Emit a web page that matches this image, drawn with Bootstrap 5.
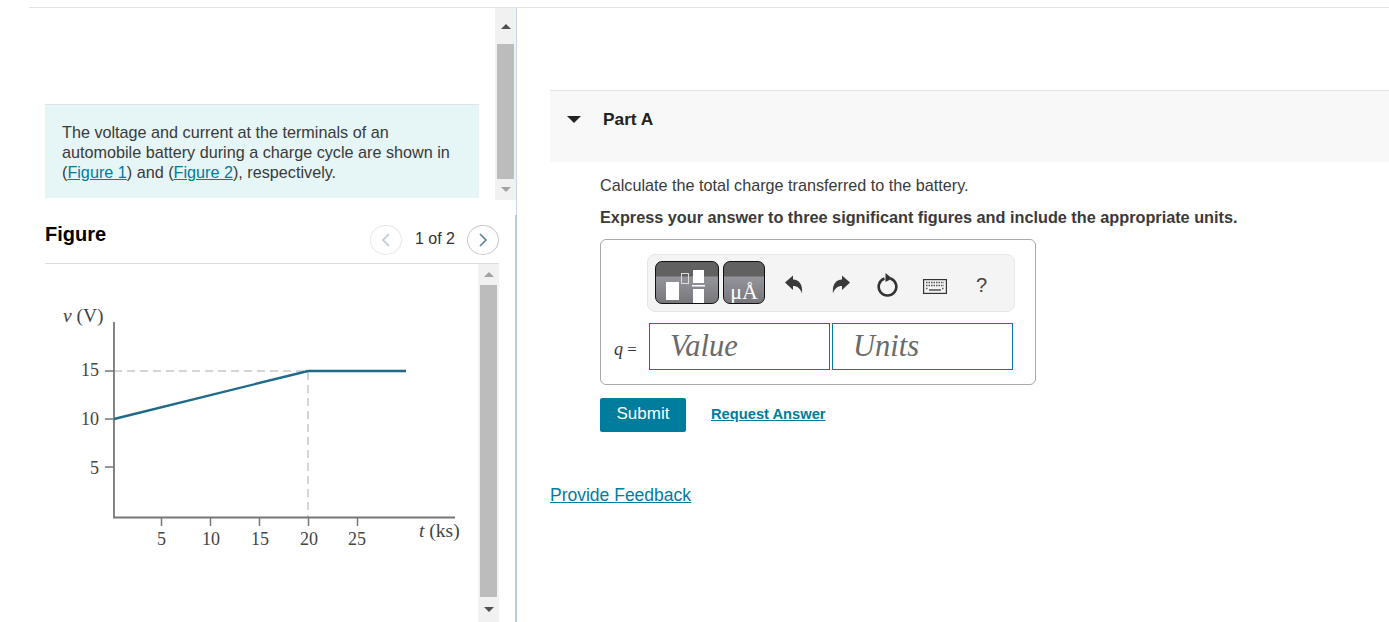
<!DOCTYPE html>
<html lang="en">
<head>
    <meta charset="UTF-8">
    <meta name="viewport" content="width=device-width, initial-scale=1.0">
    <title>Part A</title>
    <link href="https://cdn.jsdelivr.net/npm/bootstrap@5.3.0/dist/css/bootstrap.min.css" rel="stylesheet">
    <style>
        html, body { height: 622px; overflow: hidden; }
        body { font-family: "Liberation Sans", Arial, sans-serif; font-size: 16px; line-height: 20px; color: #3a3a3a; background: #fff; }
        a { color: #007c9d; }

        .frame { margin: 7px 0 0 29px; border-top: 1px solid #e3e3e3; height: 615px; }
        .left-pane { width: 488px; flex: none; }
        .intro-part { height: 207px; border-right: 1px solid #c9d6e4; }
        .intro-text { width: 466px; padding: 96px 0 0 16px; }
        .intro-box { width: 434px; height: 94px; background: #e6f5f6; border-top: 1px solid #dde4e6; padding: 17px 16px 0 17px; font-size: 16.2px; }
        .figure-part { height: 407px; padding-left: 16px; border-right: 2px solid #b6cadf; }
        .figure-head { width: 454px; height: 49px; border-bottom: 1px solid #ddd; }
        .figure-title { font-size: 20px; font-weight: 700; color: #000; margin: 9px 0 0 0; line-height: 20px; }
        .pager { margin-top: 10px; }
        .pager-count { color: #333; margin: 4px 12px 0 13px; }
        .pager-btn { width: 32px; height: 30px; border-radius: 50%; border: 1px solid #c8c8c8; background: #fff; padding: 0; display: flex; align-items: center; justify-content: center; }
        .pager-btn.is-off { border-color: #e6e6e6; }
        .figure-body { width: 454px; height: 358px; }
        .chart-wrap { width: 433px; }
        .chart-wrap svg { display: block; }
        .chart-num { font-family: "Liberation Serif", "Times New Roman", serif; font-size: 18px; fill: #444; }
        .chart-axis-name { font-family: "Liberation Serif", "Times New Roman", serif; font-size: 19.500px; fill: #444; }

        .fake-scroll { width: 21px; background: #f1f1f1; flex: none; }
        .fake-scroll.top-one { height: 192px; }
        .fake-scroll.fig-one { height: 358px; }
        .scroll-thumb { width: 17px; background: #bcbcbc; margin: 0 auto; }
        .top-one .scroll-thumb { height: 135px; }
        .fig-one .scroll-thumb { height: 312px; }
        .top-one .scroll-end { height: 36px; }
        .top-one .scroll-end:last-child { height: 21px; }
        .fig-one .scroll-end { height: 21px; }
        .fig-one .scroll-end:last-child { height: 25px; }
        .arrow-up { border-left: 5px solid transparent; border-right: 5px solid transparent; border-bottom: 5px solid #505050; }
        .arrow-down { border-left: 5px solid transparent; border-right: 5px solid transparent; border-top: 5px solid #505050; }
        .arrow-dim { border-top-color: #a3a3a3; border-bottom-color: #a3a3a3; }

        .right-pane { padding-left: 33px; min-width: 0; }
        .part-head { margin-top: 82px; height: 72px; background: #f8f8f8; border-top: 1px solid #e3e3e3; padding: 18px 0 0 17px; }
        .part-tri { border-left: 7px solid transparent; border-right: 7px solid transparent; border-top: 7px solid #222; margin-top: 7px; }
        .part-name { font-weight: 700; color: #222; margin-left: 22px; font-size: 17.300px; }
        .part-body { padding-left: 50px; }
        .task-line { margin: 13px 0 0; font-size: 16.200px; }
        .task-hint { margin: 12px 0 0; font-weight: 700; font-size: 16.250px; }
        .answer-box { width: 436px; height: 146px; margin-top: 12px; border: 1px solid #aaa; border-radius: 6px; padding: 14px 0 0 46px; }
        .tools { width: 368px; height: 58px; background: #f4f4f4; border: 1px solid #e6e6e6; border-radius: 8px; padding: 6px 0 0 7px; }
        .tpl-btn { height: 43px; border: 1px solid #111; border-radius: 7px; background: linear-gradient(#616161 0, #616161 14px, #94949c 15px, #77777b 100%); padding: 0; overflow: hidden; }
        .tpl-math { width: 64px; margin-right: 4px; }
        .tpl-units { width: 42px; margin-right: 5px; color: #fff; font-family: "Liberation Serif", serif; font-size: 22px; line-height: 20px; padding-top: 18px; }
        .tpl-btn svg { display: block; }
        .tool-slot { width: 47px; height: 43px; display: flex; align-items: center; justify-content: center; padding-top: 4px; }
        .tool-slot.keys-slot { padding-top: 7px; }
        .tool-help { font-size: 20px; color: #444; }
        .answer-row { margin: 11px 0 0 -33px; }
        .var-name { width: 35px; padding-top: 5px; font-family: "Liberation Serif", serif; font-size: 17px; color: #333; white-space: nowrap; }
        .var-name i { font-size: 18px; }
        .answer-input.form-control { width: 181px; height: 47px; margin-right: 2px; border: 1px solid #007c9d; border-radius: 0; padding: 0 0 0 20px; font-family: "Liberation Serif", serif; font-style: italic; font-size: 30.500px; color: #555; }
        .answer-input.form-control::placeholder { color: #6a6a6a; opacity: 1; }
        .submit-row { margin-top: 13px; }
        .submit-btn.btn { width: 86px; height: 34px; padding: 0 0 2px; background: #007c9d; border: 0; border-radius: 2px; color: #fff; font-size: 17px; }
        .request-link { margin-left: 25px; font-size: 14.700px; font-weight: 700; padding-bottom: 2px; }
        .feedback-link { display: inline-block; margin-top: 52px; font-size: 17.500px; line-height: 22px; }
    </style>
</head>
<body>
    <div class="frame d-flex">
        <div class="left-pane">
            <div class="intro-part d-flex">
                <div class="intro-text">
                    <div class="intro-box">
                        The voltage and current at the terminals of an automobile battery during a charge cycle are shown in
                        (<a href="#">Figure 1</a>) and (<a href="#">Figure 2</a>), respectively.
                    </div>
                </div>
                <div class="fake-scroll top-one">
                    <div class="scroll-end d-flex justify-content-center align-items-center"><div class="arrow-up"></div></div>
                    <div class="scroll-thumb"></div>
                    <div class="scroll-end d-flex justify-content-center align-items-center"><div class="arrow-down arrow-dim"></div></div>
                </div>
            </div>
            <div class="figure-part">
                <div class="figure-head d-flex justify-content-between">
                    <div class="figure-title">Figure</div>
                    <div class="pager d-flex align-items-start">
                        <button class="pager-btn is-off" type="button" aria-label="Previous">
                            <svg width="10" height="14" viewBox="0 0 10 14"><path d="M8 1 2 7l6 6" fill="none" stroke="#c5cfd8" stroke-width="1.800"/></svg>
                        </button>
                        <span class="pager-count">1 of 2</span>
                        <button class="pager-btn" type="button" aria-label="Next">
                            <svg width="10" height="14" viewBox="0 0 10 14"><path d="M2 1l6 6-6 6" fill="none" stroke="#4f7c9a" stroke-width="1.500"/></svg>
                        </button>
                    </div>
                </div>
                <div class="figure-body d-flex">
                    <div class="chart-wrap">
                        <svg width="433" height="358" viewBox="45 264 433 358">
                            <path d="M114 371H308V517" fill="none" stroke="#c8c8c8" stroke-width="1.500" stroke-dasharray="8 5"/>
                            <path d="M114 322V517.500H455" fill="none" stroke="#777" stroke-width="1.800"/>
                            <path d="M105 371h9M105 419h9M105 467h9M161.500 517v9M210.500 517v9M259.500 517v9M308.500 517v9M357.500 517v9" fill="none" stroke="#777" stroke-width="1.500"/>
                            <path d="M114 419 308 371H406" fill="none" stroke="#1e6a8a" stroke-width="2.400"/>
                            <text class="chart-axis-name" x="63" y="322"><tspan font-style="italic">v</tspan> (V)</text>
                            <text class="chart-num" x="81" y="376">15</text>
                            <text class="chart-num" x="81" y="425">10</text>
                            <text class="chart-num" x="90" y="474">5</text>
                            <text class="chart-num" x="157" y="545">5</text>
                            <text class="chart-num" x="202" y="545">10</text>
                            <text class="chart-num" x="251" y="545">15</text>
                            <text class="chart-num" x="300" y="545">20</text>
                            <text class="chart-num" x="348" y="545">25</text>
                            <text class="chart-axis-name" x="419" y="537"><tspan font-style="italic">t</tspan> (ks)</text>
                        </svg>
                    </div>
                    <div class="fake-scroll fig-one">
                        <div class="scroll-end d-flex justify-content-center align-items-center"><div class="arrow-up arrow-dim"></div></div>
                        <div class="scroll-thumb"></div>
                        <div class="scroll-end d-flex justify-content-center align-items-center"><div class="arrow-down"></div></div>
                    </div>
                </div>
            </div>
        </div>

        <div class="right-pane flex-grow-1">
            <div class="part-head d-flex align-items-start">
                <div class="part-tri"></div>
                <div class="part-name">Part A</div>
            </div>
            <div class="part-body">
                <p class="task-line">Calculate the total charge transferred to the battery.</p>
                <p class="task-hint">Express your answer to three significant figures and include the appropriate units.</p>
                <div class="answer-box">
                    <div class="tools d-flex">
                        <button class="tpl-btn tpl-math" type="button" aria-label="Templates">
                            <svg width="62" height="41" viewBox="0 0 62 41">
                                <rect x="10" y="20" width="13" height="18" fill="#fff"/>
                                <rect x="25.500" y="11.500" width="7" height="10" fill="none" stroke="#ddd" stroke-width="1"/>
                                <rect x="37" y="8" width="11" height="13" fill="#fff"/>
                                <rect x="36" y="23" width="13" height="1.500" fill="#fff"/>
                                <rect x="37" y="27" width="11" height="14" fill="#fff"/>
                            </svg>
                        </button>
                        <button class="tpl-btn tpl-units" type="button">μÅ</button>
                        <div class="tool-slot">
                            <svg width="18" height="20" viewBox="0 0 18 20"><path d="M0 7.500 8 .5V4.500c6 0 10 5 9 14-1.500-5-4.500-7.500-9-7.500v4z" fill="#3a3a3a"/></svg>
                        </div>
                        <div class="tool-slot">
                            <svg width="18" height="20" viewBox="0 0 18 20"><path d="M18 7.500 10 .5V4.500c-6 0-10 5-9 14 1.500-5 4.500-7.500 9-7.500v4z" fill="#3a3a3a"/></svg>
                        </div>
                        <div class="tool-slot">
                            <svg width="22" height="24" viewBox="0 0 22 24">
                                <path d="M7.500 5.500a8.800 8.800 0 1 0 6 0" fill="none" stroke="#333" stroke-width="2.600"/>
                                <path d="M8.500 0 15 5.500 8.500 9z" fill="#333"/>
                            </svg>
                        </div>
                        <div class="tool-slot keys-slot">
                            <svg width="24" height="15" viewBox="0 0 24 15">
                                <rect x=".6" y=".6" width="22.800" height="13.800" fill="#f4f4f4" stroke="#333" stroke-width="1.200"/>
                                <path d="M3 3.500h18M3 6.500h18M3 9.500h2M19 9.500h2" stroke="#555" stroke-width="1.600" stroke-dasharray="1.500 1"/>
                                <path d="M6 11h12" stroke="#444" stroke-width="1.400"/>
                            </svg>
                        </div>
                        <div class="tool-slot tool-help">?</div>
                    </div>
                    <div class="answer-row d-flex align-items-center">
                        <span class="var-name ps-0"><i>q</i> =</span>
                        <input class="answer-input form-control" type="text" placeholder="Value" aria-label="Value">
                        <input class="answer-input form-control" type="text" placeholder="Units" aria-label="Units">
                    </div>
                </div>
                <div class="submit-row d-flex align-items-center">
                    <button class="submit-btn btn" type="button">Submit</button>
                    <a class="request-link" href="#">Request Answer</a>
                </div>
            </div>
            <a class="feedback-link" href="#">Provide Feedback</a>
        </div>
    </div>
    <script src="https://cdn.jsdelivr.net/npm/bootstrap@5.3.0/dist/js/bootstrap.bundle.min.js"></script>
</body>
</html>
